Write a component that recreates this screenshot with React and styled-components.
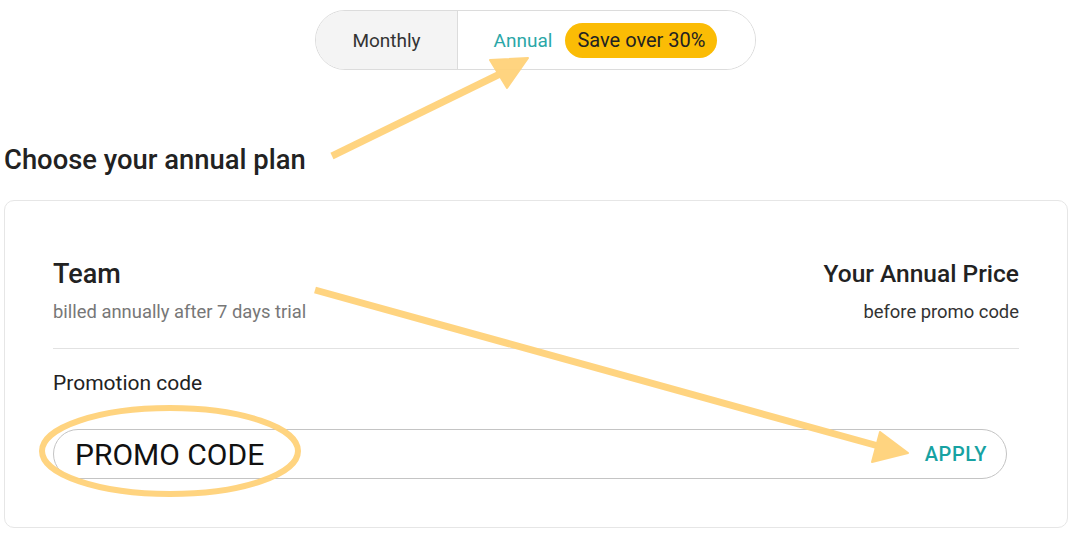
import React from "react";
import styled, { createGlobalStyle } from "styled-components";

const GlobalStyle = createGlobalStyle`
  html, body {
    margin: 0;
    padding: 0;
    background: #ffffff;
  }
  body {
    font-family: Roboto, "Liberation Sans", Arial, sans-serif;
    color: #212121;
  }
`;

function App() {
  return (
    <Page>
      <GlobalStyle />
      <Toggle>
        <Segment>Monthly</Segment>
        <Segment active>
          <span className="label">Annual</span>
          <Badge>Save over 30%</Badge>
        </Segment>
      </Toggle>

      <Heading>Choose your annual plan</Heading>

      <Card>
        <PlanRow>
          <div>
            <PlanName>Team</PlanName>
            <Hint>billed annually after 7 days trial</Hint>
          </div>
          <PriceBlock>
            <PriceTitle>Your Annual Price</PriceTitle>
            <Hint dark>before promo code</Hint>
          </PriceBlock>
        </PlanRow>
        <Divider />
        <FieldLabel>Promotion code</FieldLabel>
        <PromoField>
          <PromoInput defaultValue="PROMO CODE" />
          <ApplyButton>APPLY</ApplyButton>
        </PromoField>
      </Card>

      <Annotations viewBox="0 0 1073 533" width="1073" height="533">
        <g fill="#ffd27a" stroke="#ffd27a" strokeLinejoin="round">
          <line x1="332" y1="156" x2="502" y2="73" strokeWidth="7" />
          <polygon points="490,60 528,58 507,88" strokeWidth="2" />
          <line x1="315" y1="290" x2="882" y2="447" strokeWidth="7" />
          <polygon points="880,432 908,453 872,462" strokeWidth="2" />
          <ellipse cx="170" cy="451" rx="128" ry="43" fill="none" strokeWidth="6" />
        </g>
      </Annotations>
    </Page>
  );
}
export default App;

const Page = styled.div`
  position: relative;
  width: 1073px;
  height: 533px;
  box-sizing: border-box;
  padding: 10px 5px 0 4px;
  display: flex;
  flex-direction: column;
  overflow: hidden;
`;

const Toggle = styled.div`
  align-self: center;
  margin-left: -1px;
  display: flex;
  height: 60px;
  border: 1px solid #dcdcdc;
  border-radius: 30px;
  overflow: hidden;
  box-sizing: border-box;
`;

const Segment = styled.div`
  display: flex;
  align-items: center;
  justify-content: center;
  gap: 13px;
  font-size: 19px;
  color: #333333;
  background: ${(p) => (p.active ? "#ffffff" : "#f4f4f4")};
  width: ${(p) => (p.active ? "298px" : "141px")};
  border-left: ${(p) => (p.active ? "1px solid #dcdcdc" : "none")};
  padding-right: ${(p) => (p.active ? "2px" : "0")};
  box-sizing: border-box;
  .label {
    color: #2aa7a7;
  }
`;

const Badge = styled.span`
  display: inline-flex;
  align-items: center;
  height: 35px;
  padding: 0 12px;
  border-radius: 18px;
  background: #fbbc05;
  color: #222222;
  font-size: 20px;
`;

const Heading = styled.h1`
  margin: 75px 0 0 0;
  font-size: 27.4px;
  font-weight: 500;
  line-height: 30px;
  color: #222222;
`;

const Card = styled.div`
  margin-top: 25px;
  border: 1px solid #e6e6e6;
  border-radius: 10px;
  padding: 56px 48px 48px 48px;
  box-sizing: border-box;
  display: flex;
  flex-direction: column;
`;

const PlanRow = styled.div`
  display: flex;
  justify-content: space-between;
  align-items: flex-start;
`;

const PlanName = styled.div`
  font-size: 27px;
  font-weight: 500;
  line-height: 34px;
  color: #222222;
`;

const Hint = styled.div`
  margin-top: 10px;
  font-size: 18.4px;
  line-height: 22px;
  color: ${(p) => (p.dark ? "#333333" : "#777777")};
`;

const PriceBlock = styled.div`
  text-align: right;
`;

const PriceTitle = styled.div`
  font-size: 24.5px;
  font-weight: 500;
  line-height: 34px;
  color: #222222;
`;

const Divider = styled.hr`
  border: none;
  border-top: 1px solid #e2e2e2;
  margin: 25px 0 0 0;
`;

const FieldLabel = styled.div`
  margin-top: 22px;
  font-size: 21px;
  line-height: 24px;
  color: #222222;
`;

const PromoField = styled.div`
  margin-top: 34px;
  margin-right: 12px;
  height: 50px;
  border: 1px solid #c4c4c4;
  border-radius: 25px;
  display: flex;
  align-items: center;
  padding: 0 19px 0 21px;
  box-sizing: border-box;
`;

const PromoInput = styled.input`
  flex: 1;
  border: none;
  outline: none;
  background: transparent;
  font-family: Roboto, "Liberation Sans", Arial, sans-serif;
  font-size: 30px;
  color: #111111;
  padding: 0;
`;

const ApplyButton = styled.button`
  border: none;
  background: transparent;
  padding: 0;
  font-family: Roboto, "Liberation Sans", Arial, sans-serif;
  font-size: 20px;
  font-weight: 500;
  letter-spacing: 0.6px;
  color: #17a2a2;
  cursor: pointer;
`;

const Annotations = styled.svg`
  position: absolute;
  left: 0;
  top: 0;
  pointer-events: none;
  opacity: 0.95;
`;
